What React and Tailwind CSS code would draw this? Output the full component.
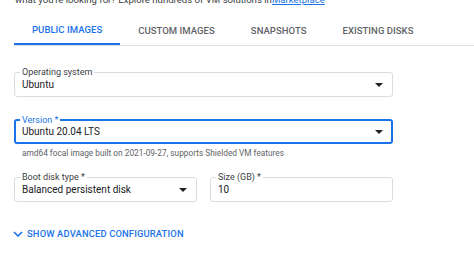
import React from 'react';

const font = { fontFamily: 'Roboto, "Liberation Sans", sans-serif' };

function Caret() {
  return (
    <svg width="8" height="4" viewBox="0 0 10 5" className="shrink-0">
      <path d="M0 0 L5 5 L10 0 Z" fill="#202124" />
    </svg>
  );
}

function Field({ label, value, focused, select, className = '' }) {
  return (
    <div
      className={`relative flex h-[25px] items-center rounded-[3px] ${
        focused
          ? 'border-2 border-[#1a73e8] pl-[6px] pr-[8px]'
          : 'border border-[#dadce0] pl-[7px] pr-[9px]'
      } ${className}`}
    >
      <span
        className={`absolute top-[-7px] bg-white px-[2px] text-[9px] leading-[12px] ${
          focused ? 'left-[4px] text-[#1a73e8]' : 'left-[5px] text-[#3c4043]'
        }`}
      >
        {label}
      </span>
      <span className="flex-1 truncate text-[10px] text-[#202124]">{value}</span>
      {select && <Caret />}
    </div>
  );
}

const tabs = ['PUBLIC IMAGES', 'CUSTOM IMAGES', 'SNAPSHOTS', 'EXISTING DISKS'];

export default function App() {
  return (
    <div className="h-[266px] w-[474px] overflow-hidden bg-white pl-[14px]" style={font}>
      <div className="mt-[-7px] whitespace-nowrap pl-[1px] text-[9.6px] leading-[14px] text-[#3c4043]">
        what you're looking for? Explore hundreds of VM solutions in
        <span className="text-[#1a73e8] underline">Marketplace</span>
      </div>

      <div className="mt-[11px] flex border-b border-[#e0e0e0]">
        {tabs.map((t, i) => (
          <div
            key={t}
            className={`flex h-[27px] items-center px-[18px] text-[9.5px] font-medium tracking-[0.05px] ${
              i === 0
                ? '-mb-px border-b-2 border-[#1a73e8] text-[#1a73e8]'
                : 'text-[#5f6368]'
            }`}
          >
            {t}
          </div>
        ))}
      </div>

      <div className="w-[379px]">
        <Field className="mt-[26px]" label="Operating system" value="Ubuntu" select />
        <Field className="mt-[22px]" label="Version *" value="Ubuntu 20.04 LTS" focused select />
        <div className="mt-[2px] pl-[8px] text-[8.3px] leading-[14px] text-[#5f6368]">
          amd64 focal image built on 2021-09-27, supports Shielded VM features
        </div>
        <div className="mt-[17px] flex gap-[13px]">
          <Field className="flex-1" label="Boot disk type *" value="Balanced persistent disk" select />
          <Field className="flex-1" label="Size (GB) *" value="10" />
        </div>
        <div className="-ml-px mt-[25px] flex items-center gap-[4px] text-[9.4px] font-medium tracking-[0.15px] text-[#1a73e8]">
          <svg width="10" height="6" viewBox="0 0 10 6" className="shrink-0">
            <path d="M1 1 L5 5 L9 1" fill="none" stroke="#1a73e8" strokeWidth="1.6" />
          </svg>
          SHOW ADVANCED CONFIGURATION
        </div>
      </div>
    </div>
  );
}
